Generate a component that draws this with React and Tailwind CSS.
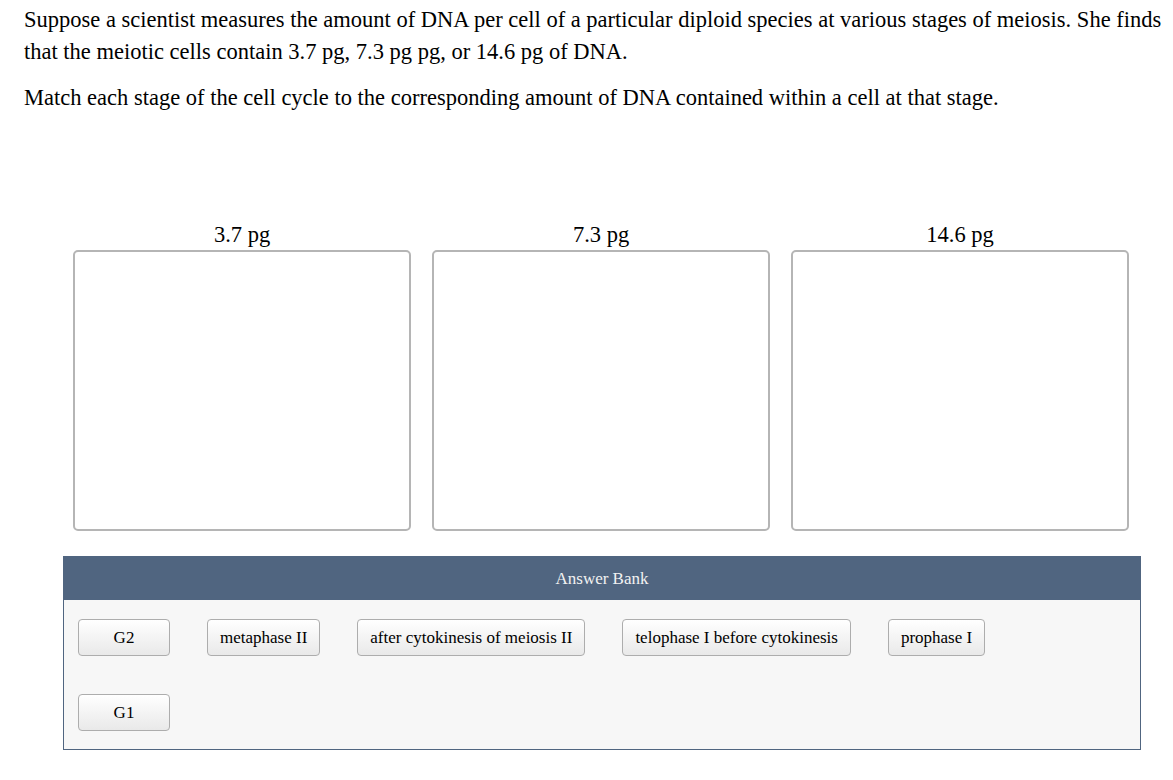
const ZONES = ['3.7 pg', '7.3 pg', '14.6 pg']
const ROW1 = ['G2', 'metaphase II', 'after cytokinesis of meiosis II', 'telophase I before cytokinesis', 'prophase I']
const ROW2 = ['G1']

function Chip({ label }) {
  return (
    <div className="h-[37px] min-w-[92px] px-[12px] flex items-center justify-center rounded-[4px] border border-[#adadad]
      bg-gradient-to-b from-white to-[#e9e9e9] text-[17px] text-black whitespace-nowrap">
      {label}
    </div>
  )
}

export default function App() {
  return (
    <div className="min-h-[780px] bg-white text-black pt-[4px] pl-[24px] pr-[8px]"
      style={{ fontFamily: '"Liberation Serif", "Times New Roman", serif' }}>
      <p className="text-[22.5px] leading-[32px]">
        Suppose a scientist measures the amount of DNA per cell of a particular diploid species at various stages of meiosis. She finds
        that the meiotic cells contain 3.7 pg, 7.3 pg pg, or 14.6 pg of DNA.
      </p>
      <p className="text-[22.5px] leading-[32px] mt-[14px]">
        Match each stage of the cell cycle to the corresponding amount of DNA contained within a cell at that stage.
      </p>

      <div className="mt-[108px] ml-[49px] flex gap-[21px]">
        {ZONES.map(z => (
          <div key={z} className="w-[338px] flex flex-col">
            <div className="text-center text-[22.5px] leading-[26px] h-[28px]">{z}</div>
            <div className="h-[281px] rounded-[5px] border-2 border-[#b5b5b5] bg-white" />
          </div>
        ))}
      </div>

      <div className="mt-[25px] ml-[39px] w-[1078px] border border-[#506580]">
        <div className="h-[43px] bg-[#506580] text-[#f2f2f2] text-[17px] flex items-center justify-center">
          Answer Bank
        </div>
        <div className="bg-[#f7f7f7] pl-[14px] pt-[19px] pb-[18px] flex flex-col gap-[38px]">
          <div className="flex gap-x-[37px]">
            {ROW1.map(l => <Chip key={l} label={l} />)}
          </div>
          <div className="flex gap-x-[37px]">
            {ROW2.map(l => <Chip key={l} label={l} />)}
          </div>
        </div>
      </div>
    </div>
  )
}
